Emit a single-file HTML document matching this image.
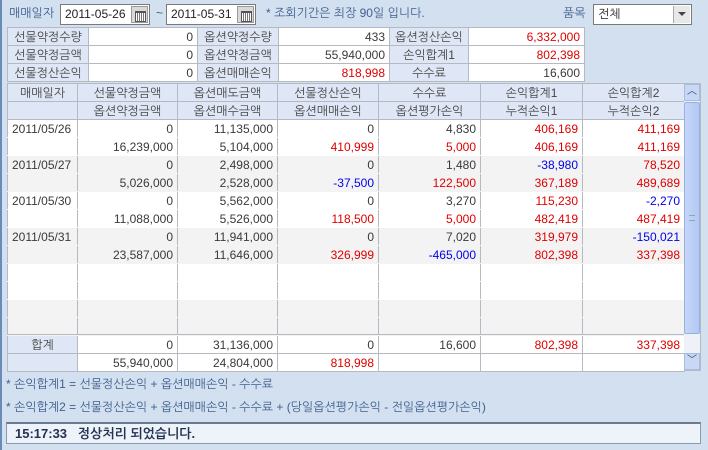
<!DOCTYPE html>
<html><head><meta charset="utf-8"><style>
*{box-sizing:border-box;margin:0;padding:0}
body{width:708px;height:450px;overflow:hidden;background:#d3e0ef;font-family:"Liberation Sans","NanumGothic","Noto Sans CJK KR",sans-serif;font-size:12px;color:#3a3a3a;position:relative}
.a{position:absolute}
.lbl{color:#3f5f8f;font-size:12px}
.inp{background:#fff;border:1px solid #7a7a7a;height:21px;font-size:12px;color:#222;line-height:19px;padding-left:4px}
.cal{position:absolute;right:1px;top:1px;width:17px;height:17px;background:#d9d9d9;border:1px solid #9a9a9a}
.cal:after{content:"";position:absolute;left:3px;top:4px;width:9px;height:8px;border:1px solid #555;border-top:2px solid #555;background:repeating-linear-gradient(90deg,#fff 0 1px,#777 1px 2px)}
table{border-collapse:collapse;table-layout:fixed;position:absolute}
td{border:1px solid #b5b9c1;height:18px;padding:0 4px;white-space:nowrap;overflow:hidden;line-height:16px}
.h{background:#dfe6f5;text-align:center;color:#444}
.r{text-align:right}
.red{color:#e00000}.blu{color:#0000ee}
.g tr.w td{border-top-color:#fff;border-bottom-color:#fff}
.g tr.s td{background:#f3f3f3;border-top-color:#f3f3f3;border-bottom-color:#f3f3f3}
</style></head><body>
<div class="a" style="left:0;top:0;width:2px;height:450px;background:#6a8bb8"></div>
<div class="a lbl" style="left:9px;top:6px">매매일자</div>
<div class="a inp" style="left:60px;top:4px;width:90px">2011-05-26<div class="cal"></div></div>
<div class="a lbl" style="left:156px;top:6px">~</div>
<div class="a inp" style="left:166px;top:4px;width:90px">2011-05-31<div class="cal"></div></div>
<div class="a lbl" style="left:266px;top:6px">* 조회기간은 최장 90일 입니다.</div>
<div class="a lbl" style="left:563px;top:6px">품목</div>
<div class="a inp" style="left:593px;top:4px;width:99px">전체<div class="a" style="right:1px;top:1px;width:17px;height:17px;background:#e8e8e8;border-left:1px solid #aaa"><div class="a" style="left:4px;top:6px;border:4px solid transparent;border-top:4px solid #444"></div></div></div>

<table style="left:7px;top:27px;width:577px">
<colgroup><col style="width:81px"><col style="width:109px"><col style="width:81px"><col style="width:111px"><col style="width:79px"><col style="width:116px"></colgroup>
<tr><td class="h">선물약정수량</td><td class="r" style="background:#fff">0</td><td class="h">옵션약정수량</td><td class="r" style="background:#fff">433</td><td class="h">옵션정산손익</td><td class="r red" style="background:#fff">6,332,000</td></tr>
<tr><td class="h">선물약정금액</td><td class="r" style="background:#fff">0</td><td class="h">옵션약정금액</td><td class="r" style="background:#fff">55,940,000</td><td class="h">손익합계1</td><td class="r red" style="background:#fff">802,398</td></tr>
<tr><td class="h">선물정산손익</td><td class="r" style="background:#fff">0</td><td class="h">옵션매매손익</td><td class="r red" style="background:#fff">818,998</td><td class="h">수수료</td><td class="r" style="background:#fff">16,600</td></tr>
</table>

<div class="a" style="left:7px;top:83px;width:694px;height:288px;background:#fff;border:1px solid #b5b9c1"></div>
<table class="g" style="left:7px;top:83px;width:677px;background:#fff">
<colgroup><col style="width:70px"><col style="width:100px"><col style="width:100px"><col style="width:101px"><col style="width:102px"><col style="width:102px"><col style="width:102px"></colgroup>
<tr><td class="h">매매일자</td><td class="h">선물약정금액</td><td class="h">옵션매도금액</td><td class="h">선물정산손익</td><td class="h">수수료</td><td class="h">손익합계1</td><td class="h">손익합계2</td></tr>
<tr><td class="h"></td><td class="h">옵션약정금액</td><td class="h">옵션매수금액</td><td class="h">옵션매매손익</td><td class="h">옵션평가손익</td><td class="h">누적손익1</td><td class="h">누적손익2</td></tr>
<tr class="w"><td>2011/05/26</td><td class="r">0</td><td class="r">11,135,000</td><td class="r">0</td><td class="r">4,830</td><td class="r red">406,169</td><td class="r red">411,169</td></tr>
<tr class="w"><td></td><td class="r">16,239,000</td><td class="r">5,104,000</td><td class="r red">410,999</td><td class="r red">5,000</td><td class="r red">406,169</td><td class="r red">411,169</td></tr>
<tr class="s"><td>2011/05/27</td><td class="r">0</td><td class="r">2,498,000</td><td class="r">0</td><td class="r">1,480</td><td class="r blu">-38,980</td><td class="r red">78,520</td></tr>
<tr class="s"><td></td><td class="r">5,026,000</td><td class="r">2,528,000</td><td class="r blu">-37,500</td><td class="r red">122,500</td><td class="r red">367,189</td><td class="r red">489,689</td></tr>
<tr class="w"><td>2011/05/30</td><td class="r">0</td><td class="r">5,562,000</td><td class="r">0</td><td class="r">3,270</td><td class="r red">115,230</td><td class="r blu">-2,270</td></tr>
<tr class="w"><td></td><td class="r">11,088,000</td><td class="r">5,526,000</td><td class="r red">118,500</td><td class="r red">5,000</td><td class="r red">482,419</td><td class="r red">487,419</td></tr>
<tr class="s"><td>2011/05/31</td><td class="r">0</td><td class="r">11,941,000</td><td class="r">0</td><td class="r">7,020</td><td class="r red">319,979</td><td class="r blu">-150,021</td></tr>
<tr class="s"><td></td><td class="r">23,587,000</td><td class="r">11,646,000</td><td class="r red">326,999</td><td class="r blu">-465,000</td><td class="r red">802,398</td><td class="r red">337,398</td></tr>
<tr class="w"><td></td><td></td><td></td><td></td><td></td><td></td><td></td></tr>
<tr class="w"><td></td><td></td><td></td><td></td><td></td><td></td><td></td></tr>
<tr class="s"><td></td><td></td><td></td><td></td><td></td><td></td><td></td></tr>
<tr class="s"><td></td><td></td><td></td><td></td><td></td><td></td><td></td></tr>
<tr><td class="h">합계</td><td class="r">0</td><td class="r">31,136,000</td><td class="r">0</td><td class="r">16,600</td><td class="r red">802,398</td><td class="r red">337,398</td></tr>
<tr><td class="h"></td><td class="r">55,940,000</td><td class="r">24,804,000</td><td class="r red">818,998</td><td></td><td></td><td></td></tr>
</table>
<div class="a" style="left:7px;top:334px;width:677px;height:1px;background:#b5b9c1"></div>
<div class="a" style="left:684px;top:84px;width:16px;height:286px;background:#eef1f7">
 <div class="a" style="left:0;top:0;width:16px;height:17px;background:#c8d8f4;border:1px solid #a8bce0;color:#3a4a6a;font-size:10px;text-align:center;line-height:14px">︿</div>
 <div class="a" style="left:0;top:18px;width:16px;height:232px;background:linear-gradient(90deg,#c6d6f8,#b2c8f2);border:1px solid #98b0e0;border-radius:2px"></div>
 <div class="a" style="left:5px;top:131px;width:6px;height:6px;border-top:1px solid #8aa;border-bottom:1px solid #8aa"></div>
 <div class="a" style="left:0;top:269px;width:16px;height:17px;background:#c8d8f4;border:1px solid #a8bce0;color:#3a4a6a;font-size:10px;text-align:center;line-height:14px">﹀</div>
</div>

<div class="a lbl" style="left:6px;top:377px">* 손익합계1 = 선물정산손익 + 옵션매매손익 - 수수료</div>
<div class="a lbl" style="left:6px;top:400px">* 손익합계2 = 선물정산손익 + 옵션매매손익 - 수수료 + (당일옵션평가손익 - 전일옵션평가손익)</div>
<div class="a" style="left:6px;top:422px;width:695px;height:22px;background:#eef3fa;border:1px solid #8a9ab0;border-top:2px solid #6a7a90;font-weight:bold;color:#223355;font-size:13px;line-height:19px;padding-left:8px">15:17:33&nbsp;&nbsp; 정상처리 되었습니다.</div>
</body></html>
